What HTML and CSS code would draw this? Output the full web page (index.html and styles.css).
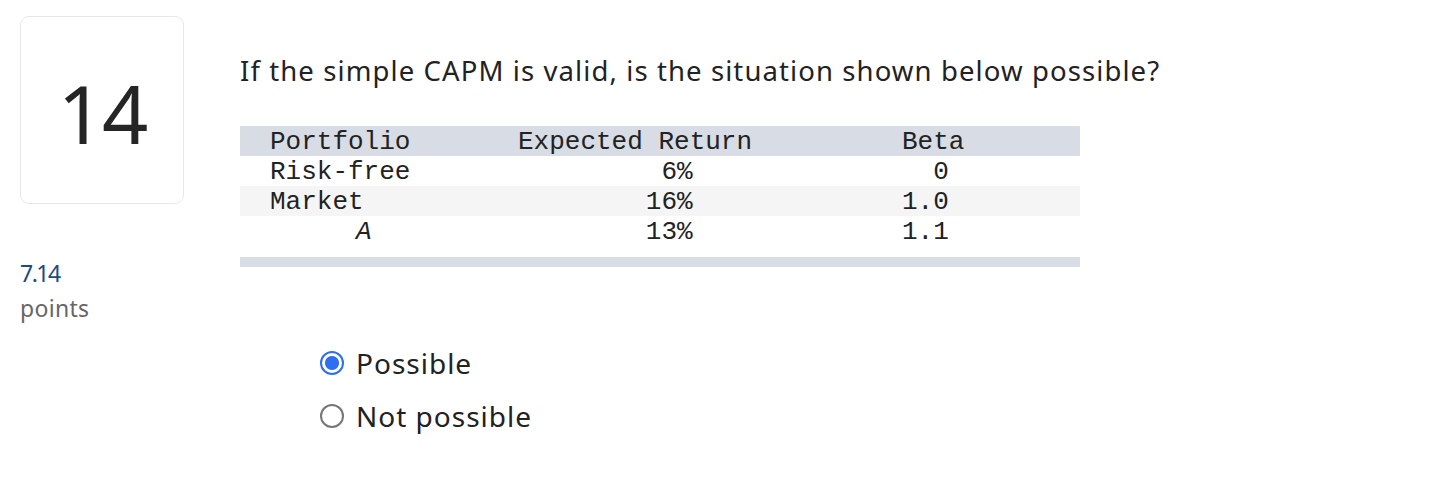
FILE: index.html
```html
<!DOCTYPE html>
<html>
<head>
<meta charset="utf-8">
<link rel="stylesheet" href="styles.css">
</head>
<body>
<div class="page">
  <aside class="side">
    <div class="qnum">14</div>
    <div class="pts">
      <div class="pts-val">7.14</div>
      <div class="pts-label">points</div>
    </div>
  </aside>
  <main class="content">
    <p class="question">If the simple CAPM is valid, is the situation shown below possible?</p>
    <div class="tbl">
      <div class="row head"><span class="c1">Portfolio</span><span class="c2">Expected Return</span><span class="c3">Beta</span></div>
      <div class="row"><span class="c1">Risk-free</span><span class="c2">         <span class="num">6%</span></span><span class="c3">  0</span></div>
      <div class="row alt"><span class="c1">Market</span><span class="c2">        <span class="num">16%</span></span><span class="c3">1.0</span></div>
      <div class="row"><span class="c1">     <i class="var">A</i></span><span class="c2">        <span class="num">13%</span></span><span class="c3">1.1</span></div>
      <div class="tbl-foot"></div>
    </div>
    <div class="answers">
      <label class="opt"><input type="radio" name="a" checked><span>Possible</span></label>
      <label class="opt"><input type="radio" name="a"><span>Not possible</span></label>
    </div>
  </main>
</div>
</body>
</html>
```
FILE: styles.css
```css
html, body {
  margin: 0;
  padding: 0;
  background: #fff;
}
body {
  font-family: "Noto Sans", Lato, sans-serif;
  color: #222;
}
.page {
  display: flex;
  padding: 16px 0 0 20px;
}
.side {
  width: 164px;
  flex: none;
}
.qnum {
  box-sizing: border-box;
  width: 164px;
  height: 188px;
  border: 1.5px solid #e8e8e8;
  border-radius: 9px;
  display: flex;
  align-items: center;
  justify-content: center;
  font-size: 81px;
  color: #252525;
  letter-spacing: -2px;
  padding-top: 4px;
}
.pts {
  margin-top: 53px;
}
.pts-val {
  font-size: 23px;
  color: #1e4b7f;
  letter-spacing: -1.5px;
  line-height: 32px;
}
.pts-label {
  font-size: 23px;
  color: #666;
  line-height: 38px;
  letter-spacing: 0.3px;
}
.content {
  margin-left: 56px;
  flex: 1;
}
.question {
  margin: 36px 0 0;
  font-size: 27.5px;
  line-height: 38px;
  color: #222;
  letter-spacing: 1.1px;
}
.tbl {
  margin-top: 36px;
  width: 840px;
  font-family: "Liberation Mono", monospace;
  font-size: 26px;
  color: #222;
}
.row {
  display: flex;
  height: 30px;
  line-height: 32px;
  padding-left: 30px;
  white-space: pre;
}
.row.head {
  background: #d8dce4;
}
.row.alt {
  background: #f5f5f5;
}
.c1 { width: 248px; }
.c2 { width: 384px; }
.num { padding-left: 3px; }
.var { padding-left: 8px; }
.tbl-foot {
  margin-top: 11px;
  height: 10px;
  background: #d8dce4;
}
.answers {
  margin: 78px 0 0 80px;
  display: flex;
  flex-direction: column;
  gap: 17px;
}
.opt {
  display: flex;
  align-items: center;
  gap: 12px;
  font-size: 28px;
  line-height: 36px;
  color: #222;
  letter-spacing: 1px;
}
.opt input {
  appearance: none;
  -webkit-appearance: none;
  margin: 0;
  width: 24px;
  height: 24px;
  border: 2px solid #767676;
  border-radius: 50%;
  box-sizing: border-box;
  background: #fff;
}
.opt input:checked {
  border: 2.5px solid #2d6ff0;
  background: radial-gradient(circle, #2d6ff0 0 6.5px, #fff 7.5px);
}
```
